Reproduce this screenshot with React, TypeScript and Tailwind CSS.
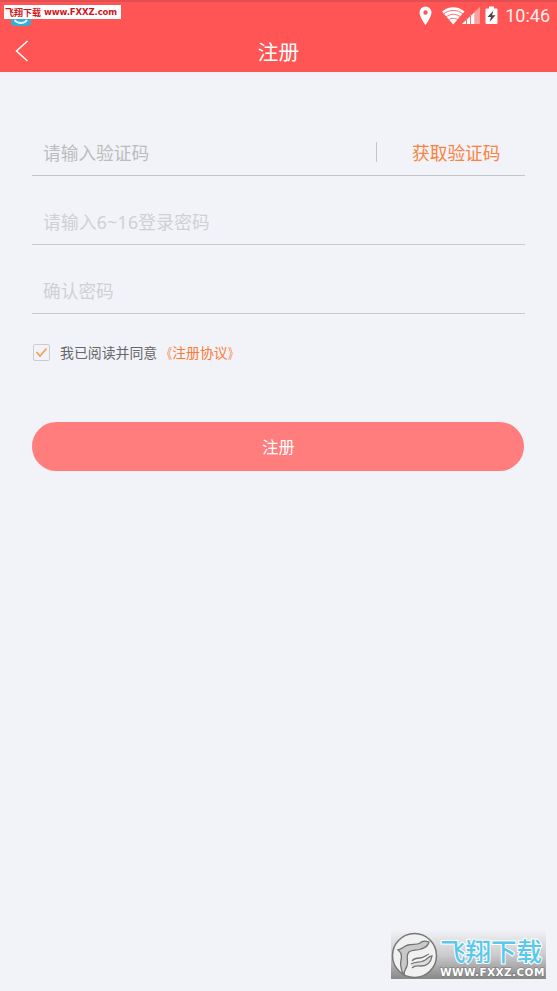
import React, { useState, FC, ChangeEvent } from "react";

interface RegisterModel {
    code: string;
    password: string;
    passconf: string;
}

const StatusBar: FC = () => {
    return (
        <div className="relative flex h-[30px] items-center justify-end border-t-2 border-[#e34f50] pr-[7px] pb-px">
            {/* app notification with the site tag over it */}
            <svg className="absolute left-[11px] top-[3px]" width="20" height="21" viewBox="0 0 20 21">
                <rect width="20" height="21" rx="4" fill="#35addb" />
                <path d="M3.500 15c3 4 10 4 12.500 0" fill="none" stroke="#e9f7fc" strokeWidth="1.800" />
            </svg>
            <div className="absolute left-[4px] top-[3px] flex h-[14px] w-[117px] items-center gap-[3px] whitespace-nowrap bg-white pl-px font-bold text-[#d2141c]">
                <span className="text-[9px] leading-none font-['Noto_Sans_CJK_SC',sans-serif]">飞翔下载</span>
                <span className="text-[8.500px] leading-none tracking-[-0.1px] font-['DejaVu_Sans',sans-serif]">www.FXXZ.com</span>
            </div>

            <svg width="82" height="22" viewBox="0 0 82 22">
                {/* location */}
                <path
                    fill="#fff"
                    fillRule="evenodd"
                    d="M7.500 1.500a6 6 0 0 0-6 6c0 4.500 6 12.500 6 12.500s6-8 6-12.500a6 6 0 0 0-6-6zm0 3.800a2.200 2.200 0 1 1 0 4.400 2.200 2.200 0 0 1 0-4.400z"
                />
                {/* wifi */}
                <path d="M24 6.500C30.500 0.800 40 0.800 46.500 6.500L35.200 19.500z" fill="#fff" />
                <g fill="none" stroke="#ff6e6e" strokeWidth="1">
                    <path d="M25.500 9c5.500-4.700 14-4.700 19.500 0" />
                    <path d="M28 12c4-3.600 10.500-3.600 14.500 0" />
                    <path d="M30.500 15c2.500-2.300 7-2.300 9.500 0" />
                </g>
                {/* signal */}
                <path d="M62 2v17H44z" fill="#ff9f9f" />
                <path d="M57.500 6.500V19H44z" fill="#fff" />
                <path d="M48.500 13v6M52.500 9v10M57 5v14" stroke="#ff7070" strokeWidth="1" />
                {/* battery */}
                <path d="M71 1.500h5v2h2.500q1 0 1 1V18q0 1-1 1h-10q-1 0-1-1V4.500q0-1 1-1H71z" fill="#fff" />
                <path d="M75.500 5.500l-6 6.500h3.500l-1.500 5 6-6.800H74z" fill="#4d4245" />
            </svg>
            <span className="ml-[5px] text-[18px] leading-none text-[#ffeeee] font-[Roboto,sans-serif]">10:46</span>
        </div>
    );
};

const Watermark: FC = () => {
    return (
        <div className="absolute left-[391px] top-[931px] flex h-[48px] w-[155px] bg-linear-to-b from-[#f0f1f4] via-[#cbcbcd] to-[#888888]">
            <svg className="shrink-0" width="48" height="48" viewBox="0 0 48 48">
                <circle cx="23.500" cy="24.500" r="22" fill="#f1f1f1" stroke="#777" strokeWidth="1.500" />
                {/* large wing */}
                <path
                    d="M12 43c-2-5-3-10-2-14 1-4 0-8-3-10 4-1 6-4 10-5 6-1 9 0 12-2 3-3 6-2 9-1-1 4-4 6-8 7-5 2-9 0-12 3-4 4 0 9-2 14-1 3-3 4-3 9z"
                    fill="#c9c9c9"
                    stroke="#747474"
                    strokeWidth="1.300"
                />
                {/* small wing */}
                <path
                    d="M20 33c5-3 8-1 12-3 4-1 5-5 9-5-1 6-5 10-11 10-4 0-6-1-9 2M21 30c2-3 5-3 8-3 4 0 6-3 9-4"
                    fill="#dedede"
                    stroke="#747474"
                    strokeWidth="1.300"
                />
            </svg>
            <div className="w-[107px] whitespace-nowrap pl-px">
                <p className="h-[35px] pt-[5px] text-[25.500px] leading-[27px] font-medium text-[#5ac8ec] [-webkit-text-stroke:2px_white] [paint-order:stroke_fill] font-['Noto_Sans_CJK_SC',sans-serif]">
                    飞翔下载
                </p>
                <p className="text-[10.500px] leading-[12px] font-bold tracking-[0.400px] text-white [-webkit-text-stroke:1.200px_#777] [paint-order:stroke_fill] font-['DejaVu_Sans',sans-serif]">
                    WWW.FXXZ.COM
                </p>
            </div>
        </div>
    );
};

const App: FC = () => {
    const [registerData, setRegisterData] = useState<RegisterModel>({
        code: "",
        password: "",
        passconf: "",
    });
    const [agreed, setAgreed] = useState(true);

    function handleChange(e: ChangeEvent<HTMLInputElement>) {
        setRegisterData({ ...registerData, [e.target.name]: e.target.value });
    }

    return (
        <div className="relative h-[991px] w-[557px] overflow-hidden bg-[#f2f3f8] font-['Noto_Sans_CJK_SC',sans-serif]">
            <header className="h-[72px] bg-[#ff5555] text-white">
                <StatusBar />
                <div className="grid h-[42px] grid-cols-[60px_1fr_60px] items-center">
                    <button type="button" aria-label="返回" className="pl-[15px]">
                        <svg width="14" height="22" viewBox="0 0 14 22" fill="none" stroke="#fff" strokeWidth="1.500">
                            <path d="M12.500 1L1.500 11l11 10" />
                        </svg>
                    </button>
                    <h1 className="text-center text-[20.700px] leading-none">注册</h1>
                </div>
            </header>

            <form className="px-[32px] pt-[58px] text-[17.700px]">
                <div className="flex h-[46px] w-[493px] items-center border-b border-[#c3c4c9]">
                    <input
                        className="w-[344px] pl-[11px] outline-none placeholder:text-[#bbbcbf]"
                        type="text"
                        name="code"
                        placeholder="请输入验证码"
                        value={registerData.code}
                        onChange={handleChange}
                    />
                    <span className="mb-[2px] h-5 w-px bg-[#c3c4c9]" />
                    <button type="button" className="ml-[35px] text-[#f8843f]">
                        获取验证码
                    </button>
                </div>

                <div className="mt-[23px] flex h-[46px] w-[493px] items-center border-b border-[#c9cacf]">
                    <input
                        className="w-full pt-[2px] pl-[11px] tracking-[0.250px] outline-none placeholder:text-[#cfd0d3] font-['Noto_Sans','Noto_Sans_CJK_SC',sans-serif]"
                        type="password"
                        name="password"
                        placeholder="请输入6~16登录密码"
                        value={registerData.password}
                        onChange={handleChange}
                    />
                </div>

                <div className="mt-[23px] flex h-[46px] w-[493px] items-center border-b border-[#c9cacf]">
                    <input
                        className="w-full pl-[11px] outline-none placeholder:text-[#cfd0d3]"
                        type="password"
                        name="passconf"
                        placeholder="确认密码"
                        value={registerData.passconf}
                        onChange={handleChange}
                    />
                </div>

                <div className="mt-[28px] flex h-5 items-center pl-px text-[13.900px]">
                    <button
                        type="button"
                        role="checkbox"
                        aria-checked={agreed}
                        onClick={() => setAgreed(!agreed)}
                        className="flex size-[17px] items-center justify-center rounded-[2px] border border-[#cbccd0]"
                    >
                        {agreed && (
                            <svg width="13" height="11" viewBox="0 0 13 11" fill="none" stroke="#f59a45" strokeWidth="1.500">
                                <path d="M1.500 5l3.500 4L11.500 1.500" />
                            </svg>
                        )}
                    </button>
                    <span className="ml-[10px] text-[#66676a]">我已阅读并同意</span>
                    <a className="ml-px text-[#fa7b34]">
                        <span className="inline-block origin-right scale-x-72">《</span>
                        注册协议
                        <span className="inline-block origin-left scale-x-72">》</span>
                    </a>
                </div>

                <button type="button" className="mt-[60px] ml-[0.400px] block h-[49px] w-[492px] rounded-full bg-[#ff7d7c] text-[16.200px] text-white">
                    注册
                </button>
            </form>

            <Watermark />
        </div>
    );
};

export default App;
